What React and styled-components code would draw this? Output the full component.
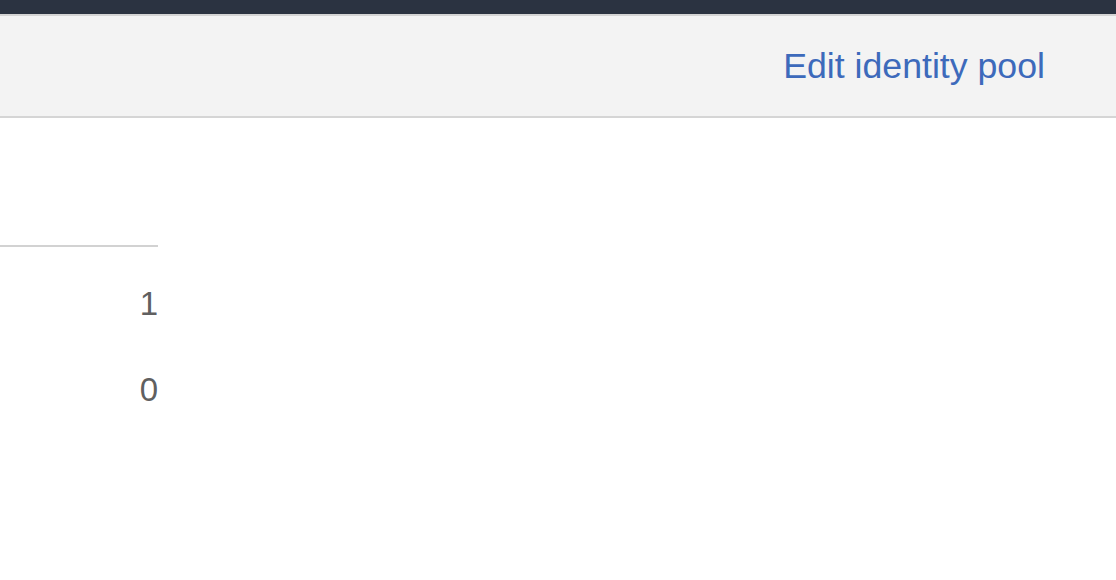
import React from "react";
import styled, { createGlobalStyle } from "styled-components";

const Global = createGlobalStyle`
  html, body { margin: 0; padding: 0; background: #ffffff; }
  body { font-family: "Liberation Sans", Arial, sans-serif; }
`;

const Page = styled.div`
  width: 1116px;
  height: 580px;
  overflow: hidden;
  display: flex;
  flex-direction: column;
`;

const TopBar = styled.div`
  height: 14px;
  background: #2b3341;
  border-bottom: 2px solid #d4d4d4;
`;

const Header = styled.div`
  height: 100px;
  background: #f3f3f3;
  border-bottom: 2px solid #d5d5d5;
  display: flex;
  align-items: center;
  justify-content: flex-end;
  padding-right: 71px;
`;

const Link = styled.a`
  font-size: 35.7px;
  color: #3d6abb;
  text-decoration: none;
  cursor: pointer;
`;

const Content = styled.div`
  padding-top: 127px;
`;

const StatsTable = styled.div`
  width: 158px;
  border-top: 2px solid #d2d2d2;
  display: flex;
  flex-direction: column;
`;

const Row = styled.div`
  height: 86px;
  box-sizing: border-box;
  padding-top: 37px;
  text-align: right;
  font-size: 33px;
  line-height: 40px;
  color: #606060;
`;

export default function App() {
  const rows = [1, 0];
  return (
    <>
      <Global />
      <Page>
        <TopBar />
        <Header>
          <Link>Edit identity pool</Link>
        </Header>
        <Content>
          <StatsTable>
            {rows.map((v, i) => (
              <Row key={i}>{v}</Row>
            ))}
          </StatsTable>
        </Content>
      </Page>
    </>
  );
}
